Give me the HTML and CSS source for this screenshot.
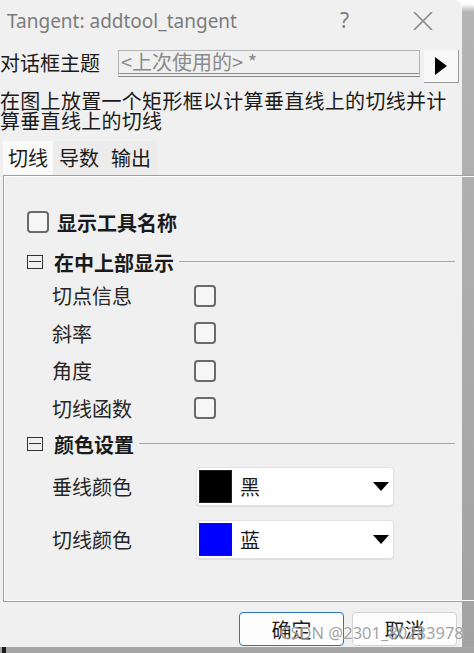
FILE: index.html
```html
<!DOCTYPE html>
<html lang="zh">
<head>
  <meta charset="UTF-8" />
  <meta name="viewport" content="width=device-width, initial-scale=1.0" />
  <title>Tangent: addtool_tangent</title>
  <link rel="stylesheet" href="styles.css">
</head>
<body>
  <div class="screen">
    <div class="top">
      <div class="dialog">
        <div class="titlebar">
          <span class="title">Tangent: addtool_tangent</span>
          <span class="help">?</span>
          <svg class="close" width="20" height="18" viewBox="0 0 20 18">
            <path d="M1 0 L19 18 M19 0 L1 18" stroke="#8a8a8a" stroke-width="1.6" fill="none" />
          </svg>
        </div>

        <div class="theme-row">
          <span class="theme-label">对话框主题</span>
          <div class="theme-input">&lt;上次使用的&gt; *</div>
          <div class="theme-btn">
            <svg width="12" height="18" viewBox="0 0 12 18"><path d="M0 0 L12 9 L0 18 Z" fill="#000" /></svg>
          </div>
        </div>

        <p class="desc">在图上放置一个矩形框以计算垂直线上的切线并计算垂直线上的切线</p>

        <div class="tabs">
          <div class="tab active">切线</div>
          <div class="tab">导数</div>
          <div class="tab">输出</div>
        </div>

        <div class="panel">
          <div class="check-row">
            <span class="checkbox"></span>
            <span class="check-text">显示工具名称</span>
          </div>

          <div class="section first">
            <span class="minus"></span>
            <span class="section-title">在中上部显示</span>
            <span class="section-line"></span>
          </div>
          <div class="opt-list">
            <div class="opt-row"><span class="opt-label">切点信息</span><span class="checkbox"></span></div>
            <div class="opt-row"><span class="opt-label">斜率</span><span class="checkbox"></span></div>
            <div class="opt-row"><span class="opt-label">角度</span><span class="checkbox"></span></div>
            <div class="opt-row"><span class="opt-label">切线函数</span><span class="checkbox"></span></div>
          </div>

          <div class="section">
            <span class="minus"></span>
            <span class="section-title">颜色设置</span>
            <span class="section-line"></span>
          </div>
          <div class="color-row">
            <span class="opt-label wide">垂线颜色</span>
            <div class="combo">
              <span class="swatch" style="background:#000000"></span>
              <span class="combo-text">黑</span>
              <span class="arrow"></span>
            </div>
          </div>
          <div class="color-row">
            <span class="opt-label wide">切线颜色</span>
            <div class="combo">
              <span class="swatch" style="background:#0000ff"></span>
              <span class="combo-text">蓝</span>
              <span class="arrow"></span>
            </div>
          </div>
        </div>

        <div class="footer">
          <button class="btn btn-ok">确定</button>
          <button class="btn">取消</button>
        </div>
        <div class="watermark">CSDN @2301_80283978</div>
      </div>
      <div class="shadow"></div>
    </div>
    <div class="below"><span class="cursor"></span></div>
  </div>
</body>
</html>
```

FILE: styles.css
```css
html, body {
  margin: 0;
  padding: 0;
  background: #ffffff;
  overflow: hidden;
}

.screen {
  width: 474px;
  height: 653px;
  display: flex;
  flex-direction: column;
}

.top {
  display: flex;
  height: 647px;
}

.dialog {
  position: relative;
  width: 462px;
  height: 647px;
  background: #f0f0f0;
  border-top-right-radius: 8px;
  font-family: "Noto Sans CJK SC", "Noto Sans", sans-serif;
  color: #1a1a1a;
}

.shadow {
  width: 12px;
  background: linear-gradient(to bottom, #ffffff 0, #ffffff 4px, #b4b4b4 12px, #a2a2a2 100%);
}

.below {
  height: 6px;
  background: #a6a6a6;
  display: flex;
}

.cursor {
  width: 4px;
  margin-left: 2px;
  background: #1a1a1a;
}

/* title bar */
.titlebar {
  height: 44px;
  display: flex;
  align-items: center;
  padding-left: 7px;
}

.title {
  font-family: "Noto Sans", sans-serif;
  font-size: 19px;
  color: #7c7c7c;
  width: 333px;
  margin-top: -3px;
}

.help {
  font-family: "Noto Sans", sans-serif;
  font-size: 21px;
  color: #7c7c7c;
  width: 73px;
  margin-top: -4px;
}

.close {
  margin-top: -3px;
}

/* theme */
.theme-row {
  display: flex;
  align-items: flex-start;
  margin-top: 6px;
  height: 33px;
}

.theme-label {
  font-size: 20px;
  line-height: 25px;
  width: 118px;
  white-space: nowrap;
}

.theme-input {
  width: 298px;
  height: 22px;
  border: 1px solid #b4b4b4;
  border-bottom: 4px double #8c8c8c;
  background: #f0f0f0;
  color: #8a8a8a;
  font-size: 20px;
  line-height: 22px;
  padding-left: 2px;
  box-sizing: content-box;
}

.theme-btn {
  margin-left: 4px;
  width: 34px;
  height: 32px;
  background: #f8f8f8;
  border-right: 1px solid #9a9a9a;
  border-bottom: 1px solid #9a9a9a;
  display: flex;
  align-items: center;
  justify-content: center;
}

.desc {
  margin: 8px 0 0;
  font-size: 20px;
  line-height: 20px;
  height: 40px;
  letter-spacing: 0.3px;
}

/* tabs */
.tabs {
  display: flex;
  margin-top: 10px;
  padding-left: 3px;
  height: 34px;
}

.tab {
  width: 52px;
  font-size: 20px;
  line-height: 34px;
  text-align: center;
  background: #ececec;
}

.tab.active {
  width: 50px;
  background: #fafafa;
}

/* panel */
.panel {
  margin-left: 3px;
  width: 452px;
  height: 425px;
  border: 1px solid #a0a0a0;
  box-shadow: inset 1px 1px 0 #fdfdfd, inset -1px -1px 0 #fdfdfd;
  padding-left: 23px;
  box-sizing: content-box;
}

.check-row {
  display: flex;
  align-items: center;
  margin-top: 35px;
  height: 22px;
}

.checkbox {
  display: inline-block;
  width: 18px;
  height: 18px;
  border: 2px solid #6a6a6a;
  border-radius: 4px;
  background: #f6f6f6;
}

.check-text {
  margin-left: 8px;
  font-size: 20px;
  font-weight: bold;
}

.section {
  display: flex;
  align-items: center;
  height: 18px;
  margin-top: 8px;
  padding-right: 24px;
}

.section.first {
  margin-top: 20px;
}

.minus {
  position: relative;
  width: 14px;
  height: 12px;
  border: 1.5px solid #333;
}

.minus::after {
  content: "";
  position: absolute;
  left: 1px;
  right: 1px;
  top: 5px;
  border-top: 1.5px solid #333;
}

.section-title {
  margin-left: 11px;
  font-size: 20px;
  font-weight: bold;
  white-space: nowrap;
}

.section-line {
  flex: 1;
  margin-left: 5px;
  border-top: 1px solid #a8a8a8;
  margin-top: -1px;
}

.opt-list {
  margin-top: 6px;
}

.opt-row {
  display: flex;
  align-items: center;
  height: 37.5px;
}

.opt-label {
  width: 142px;
  padding-left: 25px;
  font-size: 20px;
  color: #262626;
}

.opt-label.wide {
  width: 144px;
}

.color-row {
  display: flex;
  align-items: center;
  height: 39px;
  margin-top: 14px;
}

.combo {
  width: 194px;
  height: 37px;
  background: #ffffff;
  border: 1px solid #e2e2e2;
  border-radius: 4px;
  box-shadow: 0 1px 1px rgba(0, 0, 0, 0.08);
  display: flex;
  align-items: center;
  padding-left: 2px;
}

.swatch {
  width: 31px;
  height: 31px;
  border: 1px solid #222;
}

.combo-text {
  flex: 1;
  margin-left: 8px;
  font-size: 20px;
}

.arrow {
  width: 0;
  height: 0;
  border-left: 8px solid transparent;
  border-right: 8px solid transparent;
  border-top: 9px solid #000;
  margin-right: 4px;
}

/* footer */
.footer {
  display: flex;
  justify-content: flex-end;
  gap: 8px;
  margin-top: 10px;
  padding-right: 5px;
}

.btn {
  width: 105px;
  height: 34px;
  border: 1px solid #d2d2d2;
  border-radius: 4px;
  background: #fdfdfd;
  font-family: "Noto Sans CJK SC", sans-serif;
  font-size: 20px;
  color: #1a1a1a;
  padding: 0;
}

.btn-ok {
  border-color: #2a73c8;
}

.watermark {
  position: absolute;
  left: 280px;
  top: 621px;
  font-family: "Noto Sans", sans-serif;
  font-size: 16.5px;
  color: rgba(140, 140, 140, 0.8);
  text-shadow: 0 0 2px rgba(255, 255, 255, 0.9);
  white-space: nowrap;
}
```
